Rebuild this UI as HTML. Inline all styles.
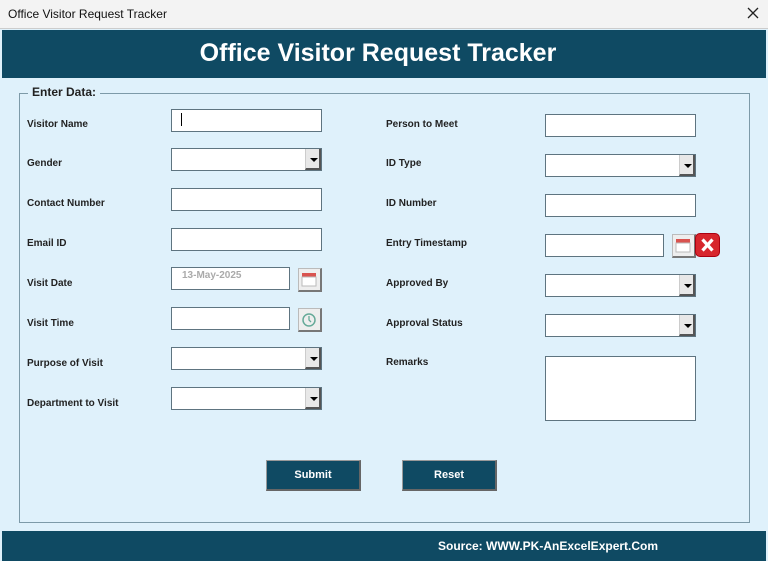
<!DOCTYPE html><html><head><style>
*{margin:0;padding:0;box-sizing:border-box}
body{width:768px;height:561px;background:#dff1fb;font-family:"Liberation Sans",sans-serif;position:relative;overflow:hidden}
.a{position:absolute}
.tb{left:0;top:0;width:768px;height:29px;background:#f3f3f3;border-bottom:1px solid #ccc;font-size:12px;padding:7px 8px;color:#111}
.hd{left:2px;top:30px;width:764px;height:48px;background:#0f4a63;color:#fff;font-weight:bold;font-size:25px;text-align:center;line-height:46px;padding-right:12px}
.fr{left:19px;top:93px;width:731px;height:430px;border:1px solid #7d9aa8}
.lg{left:28px;top:85px;background:#dff1fb;padding:0 4px;font-weight:bold;font-size:12px;color:#222}
.l{font-weight:bold;font-size:10px;color:#222}
.i{background:#fff;border:1px solid #5e7480;height:23px}
.dd{position:absolute;right:0;top:0;width:16px;height:21px;background:#e8e8e8;border-left:1px solid #ccc;border-right:2px solid #555;border-bottom:2px solid #555}
.dd:after{content:"";position:absolute;left:4px;top:9px;border:4px solid transparent;border-top:4px solid #000;border-bottom:0}
.btn{background:#0f4a63;color:#fff;font-weight:bold;font-size:11px;text-align:center;line-height:29px;width:95px;height:31px;border:1px solid #999;border-right:2px solid #666;border-bottom:2px solid #666}
.ft{left:2px;top:531px;width:764px;height:30px;background:#0f4a63;color:#fff;font-weight:bold;font-size:12px;line-height:30px;padding-left:436px}
.ib{width:24px;height:24px;background:#eee;border:1px solid #bbb;border-right:2px solid #777;border-bottom:2px solid #777}
</style></head><body>
<div class="a tb">Office Visitor Request Tracker</div>
<svg class="a" style="left:746px;top:6px" width="14" height="14" viewBox="0 0 14 14"><path d="M2 2L12 12M12 2L2 12" stroke="#222" stroke-width="1.3"/></svg>
<div class="a hd">Office Visitor Request Tracker</div>
<div class="a fr"></div>
<div class="a lg">Enter Data:</div>

<div class="a l" style="left:27px;top:119px">Visitor Name</div>
<div class="a l" style="left:27px;top:158px">Gender</div>
<div class="a l" style="left:27px;top:198px">Contact Number</div>
<div class="a l" style="left:27px;top:238px">Email ID</div>
<div class="a l" style="left:27px;top:278px">Visit Date</div>
<div class="a l" style="left:27px;top:318px">Visit Time</div>
<div class="a l" style="left:27px;top:358px">Purpose of Visit</div>
<div class="a l" style="left:27px;top:398px">Department to Visit</div>

<div class="a i" style="left:171px;top:109px;width:151px"><div class="a" style="left:9px;top:3px;width:1px;height:13px;background:#000"></div></div>
<div class="a i" style="left:171px;top:148px;width:151px"><div class="dd"></div></div>
<div class="a i" style="left:171px;top:188px;width:151px"></div>
<div class="a i" style="left:171px;top:228px;width:151px"></div>
<div class="a i" style="left:171px;top:267px;width:119px;font-size:10px;font-weight:bold;color:#aaa;padding:2px 10px">13-May-2025</div>
<div class="a ib" style="left:298px;top:268px"><svg width="20" height="20" viewBox="0 0 20 20"><rect x="3" y="4" width="14" height="4" fill="#d9534f"/><rect x="3" y="8" width="14" height="9" fill="#fff" stroke="#bbb"/></svg></div>
<div class="a i" style="left:171px;top:307px;width:119px"></div>
<div class="a ib" style="left:298px;top:308px"><svg width="20" height="20" viewBox="0 0 20 20"><circle cx="10" cy="11" r="6" fill="none" stroke="#6a9" stroke-width="1.5"/><path d="M10 7v4l2 2" stroke="#6a9" fill="none" stroke-width="1.3"/></svg></div>
<div class="a i" style="left:171px;top:347px;width:151px"><div class="dd"></div></div>
<div class="a i" style="left:171px;top:387px;width:151px"><div class="dd"></div></div>

<div class="a l" style="left:386px;top:119px">Person to Meet</div>
<div class="a l" style="left:386px;top:158px">ID Type</div>
<div class="a l" style="left:386px;top:198px">ID Number</div>
<div class="a l" style="left:386px;top:238px">Entry Timestamp</div>
<div class="a l" style="left:386px;top:278px">Approved By</div>
<div class="a l" style="left:386px;top:318px">Approval Status</div>
<div class="a l" style="left:386px;top:357px">Remarks</div>

<div class="a i" style="left:545px;top:114px;width:151px"></div>
<div class="a i" style="left:545px;top:154px;width:151px"><div class="dd"></div></div>
<div class="a i" style="left:545px;top:194px;width:151px"></div>
<div class="a i" style="left:545px;top:234px;width:119px"></div>
<div class="a ib" style="left:672px;top:234px"><svg width="20" height="20" viewBox="0 0 20 20"><rect x="3" y="4" width="14" height="4" fill="#d9534f"/><rect x="3" y="8" width="14" height="9" fill="#fff" stroke="#bbb"/></svg></div>
<div class="a" style="left:695px;top:233px;width:25px;height:24px;background:#d7262d;border-radius:5px;border:1px solid #a01"><svg width="23" height="22" viewBox="0 0 23 22"><path d="M6.5 5.5L16.5 16.5M16.5 5.5L6.5 16.5" stroke="#fff" stroke-width="3.2"/></svg></div>
<div class="a i" style="left:545px;top:274px;width:151px"><div class="dd"></div></div>
<div class="a i" style="left:545px;top:314px;width:151px"><div class="dd"></div></div>
<div class="a i" style="left:545px;top:356px;width:151px;height:65px"></div>

<div class="a btn" style="left:266px;top:460px">Submit</div>
<div class="a btn" style="left:402px;top:460px">Reset</div>
<div class="a ft">Source: WWW.PK-AnExcelExpert.Com</div>
</body></html>
